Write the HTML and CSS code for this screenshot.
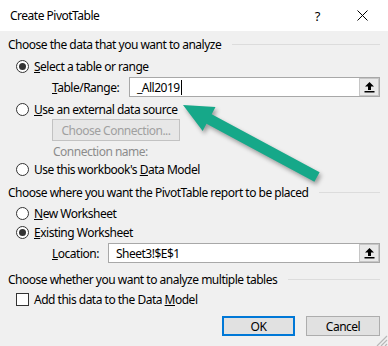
FILE: index.html
```html
<!DOCTYPE html>
<html>
<head>
<meta charset="utf-8">
<link rel="stylesheet" href="styles.css">
</head>
<body>
<div class="dialog">
  <div class="titlebar">
    <span class="title">Create PivotTable</span>
    <span class="help">?</span>
    <svg class="close" width="11" height="11" viewBox="0 0 11 11"><path d="M0.5 0.5 L10.5 10.5 M10.5 0.5 L0.5 10.5" stroke="#000" stroke-width="1" fill="none"/></svg>
  </div>
  <div class="content">
    <div class="group g1"><span class="gtext">Choose the data that you want to analyze</span><span class="gline"></span></div>
    <div class="opt r1"><span class="radio on"></span><span><u>S</u>elect a table or range</span></div>
    <div class="field f1">
      <span class="flabel w-table"><u>T</u>able/Range:</span>
      <div class="input"><span class="val">_All2019</span><span class="caret"></span>
        <span class="pick"><svg width="11" height="12" viewBox="0 0 11 12"><path d="M5.5 1 L10 5.5 L7 5.5 L7 9 L4 9 L4 5.5 L1 5.5 Z" fill="#000"/><rect x="0.5" y="10" width="10" height="1.5" fill="#000"/></svg></span>
      </div>
    </div>
    <div class="opt r2"><span class="radio"></span><span><u>U</u>se an external data source</span></div>
    <div class="connbtn">Choose Connection...</div>
    <div class="connname">Connection name:</div>
    <div class="opt r3"><span class="radio"></span><span>Use this workbook's <u>D</u>ata Model</span></div>
    <div class="group g2"><span class="gtext">Choose where you want the PivotTable report to be placed</span><span class="gline"></span></div>
    <div class="opt r4"><span class="radio"></span><span><u>N</u>ew Worksheet</span></div>
    <div class="opt r5"><span class="radio on"></span><span><u>E</u>xisting Worksheet</span></div>
    <div class="field f2">
      <span class="flabel w-loc"><u>L</u>ocation:</span>
      <div class="input"><span class="val">Sheet3!$E$1</span>
        <span class="pick"><svg width="11" height="12" viewBox="0 0 11 12"><path d="M5.5 1 L10 5.5 L7 5.5 L7 9 L4 9 L4 5.5 L1 5.5 Z" fill="#000"/><rect x="0.5" y="10" width="10" height="1.5" fill="#000"/></svg></span>
      </div>
    </div>
    <div class="group g3"><span class="gtext">Choose whether you want to analyze multiple tables</span><span class="gline"></span></div>
    <div class="opt r6"><span class="check"></span><span>Add this data to the Data <u>M</u>odel</span></div>
    <div class="buttons">
      <div class="btn ok">OK</div>
      <div class="btn">Cancel</div>
    </div>
  </div>
  <svg class="grip" width="13" height="12" viewBox="0 0 13 12"><path d="M12 2 L2 12 M12 6 L6 12 M12 10 L10 12" stroke="#b8b8b8" stroke-width="1.2" fill="none"/></svg>
  <svg class="arrow" width="388" height="346" viewBox="0 0 388 346"><polygon points="183,105 215.5,107 211.7,114.2 319.6,172.2 314.4,181.8 206.5,123.8 202.7,131" fill="#16a889"/></svg>
</div>
</body>
</html>
```
FILE: styles.css
```css
* { box-sizing: border-box; }
html, body { margin: 0; padding: 0; }
body {
  width: 388px; height: 346px; overflow: hidden;
  font-family: "Noto Sans", "Open Sans", sans-serif;
  font-size: 12px; color: #000; letter-spacing: -0.5px;
}
.dialog { position: relative; width: 388px; height: 346px; background: #f0f0f0; }
.titlebar {
  height: 31px; background: #fff; display: flex; align-items: center;
  padding-left: 10px;
}
.title { font-size: 12px; }
.help { margin-left: auto; font-size: 13px; margin-right: 37px; }
.close { margin-right: 20px; }
.content { padding: 0 8px; }
.group { display: flex; align-items: center; height: 18px; }
.gtext { white-space: nowrap; }
.gline { flex: 1; height: 1px; background: #dcdcdc; margin-left: 11px; }
.g1 { margin-top: 4px; }
.g2 { margin-top: 5px; }
.g3 { margin-top: 7px; }
.opt { display: flex; align-items: center; height: 18px; padding-left: 8px; gap: 5px; }
.r1 { margin-top: 4px; }
.r2 { margin-top: 3px; }
.r3 { margin-top: 0; }
.r4 { margin-top: 3px; }
.r5 { margin-top: 1px; }
.r6 { margin-top: 2px; }
.radio {
  width: 13px; height: 13px; border: 1px solid #333; border-radius: 50%;
  background: #fff; display: flex; align-items: center; justify-content: center; flex: none;
}
.radio.on::after { content: ""; width: 7px; height: 7px; border-radius: 50%; background: #333; }
.check { width: 13px; height: 13px; border: 1px solid #333; background: #fff; flex: none; }
.field { display: flex; align-items: center; height: 20px; padding-left: 44px; }
.f1 { margin-top: 2px; }
.f2 { margin-top: 2px; }
.flabel { white-space: nowrap; flex: none; }
.w-table { width: 77px; }
.w-loc { width: 56px; }
.input {
  flex: 1; height: 20px; background: #fff; border: 1px solid #a8a8a8;
  display: flex; align-items: center; padding-left: 7px; position: relative;
}
.val { white-space: nowrap; }
.caret { width: 1px; height: 15px; background: #000; margin-left: 1px; }
.pick {
  margin-left: auto; width: 20px; height: 18px; background: #e9e9e9;
  border: 1px solid #c6c6c6; display: flex; align-items: center; justify-content: center;
}
.connbtn {
  margin: 1px 0 0 44px; width: 128px; height: 22px; border: 1px solid #c2c2c2;
  background: #e7e7e7; color: #a0a0a0; display: flex; align-items: center; justify-content: center;
}
.connname { margin: 3px 0 0 45px; height: 16px; line-height: 16px; color: #8c8c8c; }
.buttons { display: flex; justify-content: flex-end; gap: 11px; margin-top: 8px; }
.btn {
  width: 74px; height: 20px; border: 1px solid #adadad; background: #e1e1e1;
  display: flex; align-items: center; justify-content: center;
}
.btn.ok { border: 2px solid #0078d7; width: 73px; }
.grip { position: absolute; right: 0; bottom: 0; }
.arrow { position: absolute; left: 0; top: 0; filter: drop-shadow(2px 3px 2px rgba(0,0,0,0.35)); }
```
